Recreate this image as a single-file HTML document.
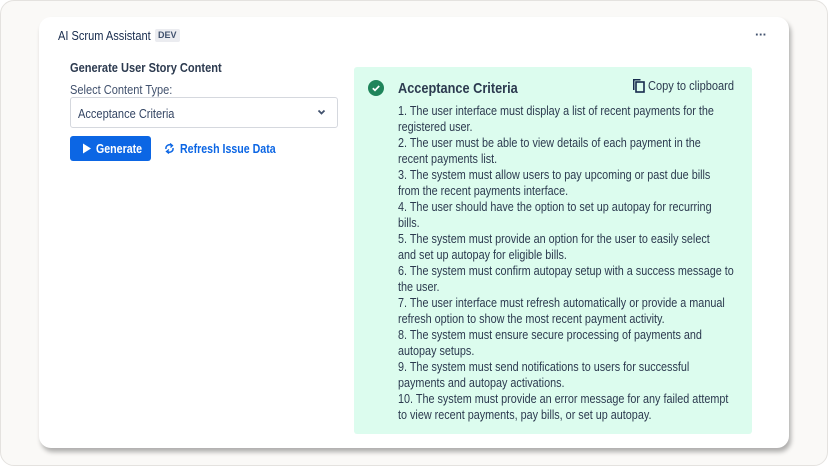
<!DOCTYPE html>
<html><head><meta charset="utf-8"><style>
*{box-sizing:border-box;margin:0;padding:0}
body{width:828px;height:466px;background:#fff;font-family:"Liberation Sans",sans-serif;color:#172b4d;position:relative;overflow:hidden}
.outer{position:absolute;left:0;top:0;width:828px;height:466px;background:#faf9f7;border:1px solid #e4e2df;border-radius:14px}
.card{position:absolute;left:39px;top:17px;width:750px;height:431px;background:#fff;border-radius:12px;box-shadow:2px 4px 5px rgba(0,0,0,.3)}
.abs{position:absolute;white-space:nowrap}
.sq{transform:scaleX(.85);transform-origin:left center;display:inline-block}
.panel{position:absolute;left:354px;top:67px;width:398px;height:367px;background:#dcfcee;border-radius:3px}
.txt{position:absolute;left:398px;top:103px;font-size:12.8px;line-height:16px;color:#2c3a4f;white-space:nowrap;transform:scaleX(.845);transform-origin:left top}
</style></head><body>
<div class="outer"></div>
<div class="card"></div>
<div class="abs" style="left:58px;top:28px;font-size:13px;color:#172b4d"><span class="sq">AI Scrum Assistant</span></div>
<div class="abs" style="left:155px;top:29px;height:13px;padding:0 3px;background:#ebecf0;border-radius:2px;font-size:9px;font-weight:bold;line-height:13px;color:#42526e">DEV</div>
<div class="abs" style="left:755px;top:27px;font-size:13px;font-weight:bold;color:#42526e;letter-spacing:-0.5px">···</div>
<div class="abs" style="left:70px;top:60px;font-size:13px;font-weight:bold;color:#2c3a4f"><span class="sq">Generate User Story Content</span></div>
<div class="abs" style="left:70px;top:82px;font-size:13px;color:#42526e"><span class="sq">Select Content Type:</span></div>
<div class="abs" style="left:70px;top:97px;width:268px;height:31px;border:1px solid #d5d8de;border-radius:3px"></div>
<div class="abs" style="left:78px;top:106px;font-size:13px;color:#344563"><span class="sq">Acceptance Criteria</span></div>
<svg class="abs" style="left:317px;top:108px" width="9" height="8" viewBox="0 0 9 8"><path d="M1.5 2.5 4.5 5.5 7.5 2.5" fill="none" stroke="#42526e" stroke-width="1.8"/></svg>
<div class="abs" style="left:70px;top:136px;width:81px;height:25px;background:#0c66e4;border-radius:3px"></div>
<svg class="abs" style="left:82px;top:143px" width="10" height="11"><path d="M1 0.5 9 5.5 1 10.5Z" fill="#fff"/></svg>
<div class="abs" style="left:96px;top:142px;font-size:12.5px;font-weight:bold;color:#fff"><span class="sq">Generate</span></div>
<svg class="abs" style="left:164px;top:143px" width="11" height="11" viewBox="0 0 11 11"><path d="M2 6A3.5 3.5 0 0 1 7.5 2.5M9 5A3.5 3.5 0 0 1 3.5 8.5" fill="none" stroke="#0c66e4" stroke-width="1.5"/><path d="M6 0.5 8.5 2.5 6.5 4.5M5 6.5 2.5 8.5 5 10.5" fill="none" stroke="#0c66e4" stroke-width="1.3"/></svg>
<div class="abs" style="left:180px;top:142px;font-size:12.5px;font-weight:bold;color:#0c66e4"><span class="sq">Refresh Issue Data</span></div>
<div class="panel"></div>
<svg class="abs" style="left:368px;top:80px" width="16" height="16"><circle cx="8" cy="8" r="8" fill="#1f845a"/><path d="M4.8 8.2 7 10.3 11.2 6" fill="none" stroke="#fff" stroke-width="1.7"/></svg>
<div class="abs" style="left:398px;top:80px;font-size:15px;font-weight:bold;color:#2c3a4f"><span class="sq">Acceptance Criteria</span></div>
<svg class="abs" style="left:632px;top:78px" width="13" height="15" viewBox="0 0 13 15"><path d="M1 1H8.5V2.5H2.5V12H1Z" fill="#172b4d"/><rect x="4" y="4" width="8" height="10" fill="none" stroke="#172b4d" stroke-width="1.6"/></svg>
<div class="abs" style="left:648px;top:78px;font-size:13px;color:#2c3a4f"><span class="sq">Copy to clipboard</span></div>
<div class="txt">1. The user interface must display a list of recent payments for the<br>registered user.<br>2. The user must be able to view details of each payment in the<br>recent payments list.<br>3. The system must allow users to pay upcoming or past due bills<br>from the recent payments interface.<br>4. The user should have the option to set up autopay for recurring<br>bills.<br>5. The system must provide an option for the user to easily select<br>and set up autopay for eligible bills.<br>6. The system must confirm autopay setup with a success message to<br>the user.<br>7. The user interface must refresh automatically or provide a manual<br>refresh option to show the most recent payment activity.<br>8. The system must ensure secure processing of payments and<br>autopay setups.<br>9. The system must send notifications to users for successful<br>payments and autopay activations.<br>10. The system must provide an error message for any failed attempt<br>to view recent payments, pay bills, or set up autopay.</div>
</body></html>
